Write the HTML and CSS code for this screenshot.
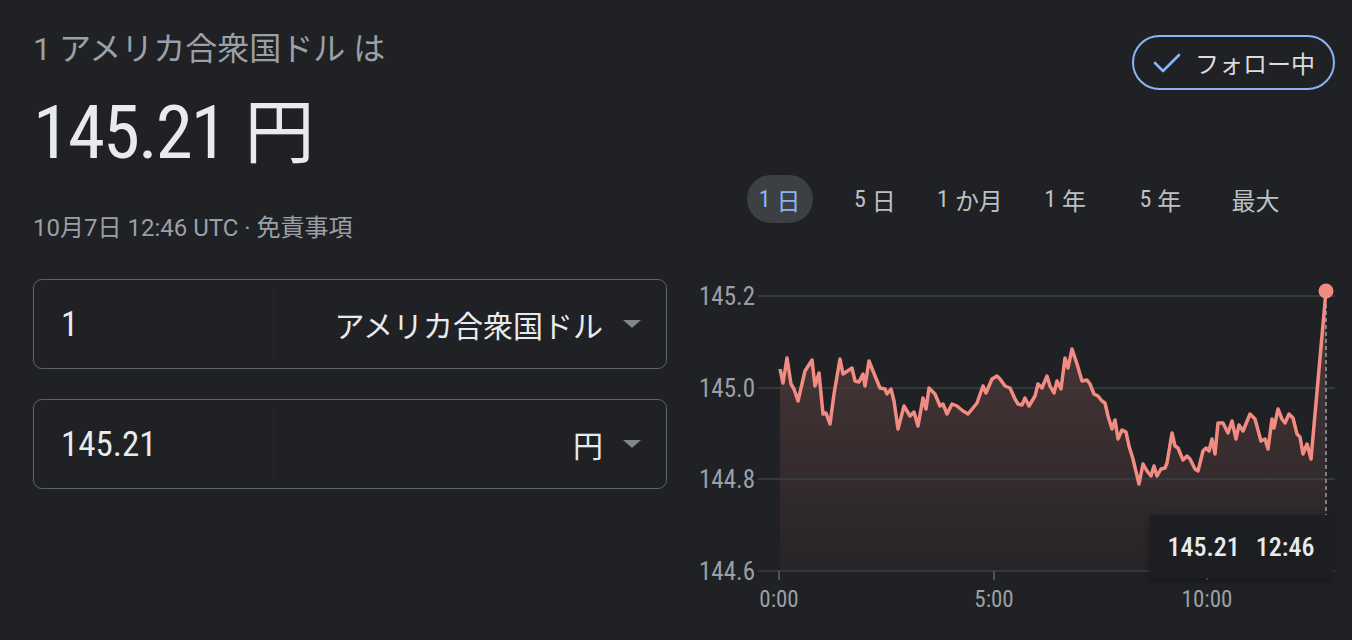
FILE: index.html
```html
<!DOCTYPE html>
<html lang="ja">
<head>
<meta charset="utf-8">
<title>1 アメリカ合衆国ドル は</title>
<link rel="stylesheet" href="styles.css">
</head>
<body>
<div class="page">
  <section class="left">
    <div class="title">1 アメリカ合衆国ドル は</div>
    <div class="big"><span class="num big-num">145.21</span> <span class="big-unit">円</span></div>
    <div class="date">10月7日 12:46 UTC · 免責事項</div>
    <div class="box">
      <div class="value num">1</div>
      <div class="cur">アメリカ合衆国ドル<span class="caret"></span></div>
    </div>
    <div class="box">
      <div class="value num">145.21</div>
      <div class="cur">円<span class="caret"></span></div>
    </div>
  </section>
  <section class="right">
    <div class="follow-row">
      <button class="follow">
        <svg class="check" width="28" height="20" viewBox="0 0 28 20"><path d="M2 10 L10 18 L26 2" fill="none" stroke="#8ab4f8" stroke-width="2.6" stroke-linecap="round" stroke-linejoin="round"/></svg>
        <span>フォロー中</span>
      </button>
    </div>
    <div class="tabs">
      <div class="tab"><span class="pill active"><span class="num">1</span> 日</span></div>
      <div class="tab"><span class="pill"><span class="num">5</span> 日</span></div>
      <div class="tab"><span class="pill"><span class="num">1</span> か月</span></div>
      <div class="tab"><span class="pill"><span class="num">1</span> 年</span></div>
      <div class="tab"><span class="pill"><span class="num">5</span> 年</span></div>
      <div class="tab"><span class="pill">最大</span></div>
    </div>
    <div class="chart">
      <svg class="chart-svg" viewBox="690 260 662 360" width="662" height="360">
        <defs>
          <linearGradient id="areaFill" gradientUnits="userSpaceOnUse" x1="0" y1="290" x2="0" y2="570">
            <stop offset="0" stop-color="#f28b82" stop-opacity="0.22"/>
            <stop offset="1" stop-color="#f28b82" stop-opacity="0.03"/>
          </linearGradient>
        </defs>
        <path fill="url(#areaFill)" d="M780,570 L780,368 783,382 787,357 791,383 794,388 798,400 805,370 812,359 815,385 819,372 823,413 826,412 830,423 834,393 840,358 843,373 852,367 855,380 859,381 863,373 865,385 869,360 873,370 880,387 885,388 887,393 891,388 894,400 898,428 904,405 910,415 914,411 918,425 923,397 926,408 929,387 935,393 940,405 943,403 947,413 952,403 957,405 963,410 968,413 977,402 983,385 986,392 992,378 997,375 1000,378 1005,385 1010,387 1015,398 1018,403 1022,404 1025,397 1029,405 1035,395 1038,383 1042,387 1047,375 1050,385 1054,392 1057,380 1061,388 1065,357 1068,367 1072,348 1077,363 1082,380 1087,379 1090,383 1094,393 1098,395 1102,400 1105,402 1108,415 1112,428 1115,419 1118,438 1122,429 1126,431 1129,445 1133,458 1139,483 1143,463 1147,470 1151,475 1154,465 1157,475 1161,468 1165,467 1167,462 1172,432 1175,445 1178,447 1183,459 1187,455 1190,458 1195,468 1198,470 1203,450 1206,447 1209,450 1212,438 1215,453 1218,422 1223,422 1228,432 1232,420 1236,438 1239,424 1243,430 1250,413 1255,418 1261,440 1265,438 1268,448 1272,418 1274,427 1278,408 1282,418 1285,422 1289,413 1293,417 1297,433 1300,436 1303,453 1307,443 1311,458 1326,290 L1326,570 Z"/>
        <g stroke="#3c4043" stroke-width="1.5">
          <line x1="758" y1="295" x2="1335" y2="295"/>
          <line x1="758" y1="387" x2="1335" y2="387"/>
          <line x1="758" y1="478" x2="1335" y2="478"/>
          <line x1="758" y1="570" x2="1335" y2="570"/>
        </g>
        <g stroke="#5f6368" stroke-width="1.5">
          <line x1="779" y1="570" x2="779" y2="579"/>
          <line x1="994" y1="570" x2="994" y2="579"/>
          <line x1="1207" y1="570" x2="1207" y2="579"/>
        </g>
        <line x1="1326" y1="296" x2="1326" y2="570" stroke="#9aa0a6" stroke-width="1.5" stroke-dasharray="4 3"/>
        <path fill="none" stroke="#f28b82" stroke-width="3.5" stroke-linejoin="round" d="M780,368 783,382 787,357 791,383 794,388 798,400 805,370 812,359 815,385 819,372 823,413 826,412 830,423 834,393 840,358 843,373 852,367 855,380 859,381 863,373 865,385 869,360 873,370 880,387 885,388 887,393 891,388 894,400 898,428 904,405 910,415 914,411 918,425 923,397 926,408 929,387 935,393 940,405 943,403 947,413 952,403 957,405 963,410 968,413 977,402 983,385 986,392 992,378 997,375 1000,378 1005,385 1010,387 1015,398 1018,403 1022,404 1025,397 1029,405 1035,395 1038,383 1042,387 1047,375 1050,385 1054,392 1057,380 1061,388 1065,357 1068,367 1072,348 1077,363 1082,380 1087,379 1090,383 1094,393 1098,395 1102,400 1105,402 1108,415 1112,428 1115,419 1118,438 1122,429 1126,431 1129,445 1133,458 1139,483 1143,463 1147,470 1151,475 1154,465 1157,475 1161,468 1165,467 1167,462 1172,432 1175,445 1178,447 1183,459 1187,455 1190,458 1195,468 1198,470 1203,450 1206,447 1209,450 1212,438 1215,453 1218,422 1223,422 1228,432 1232,420 1236,438 1239,424 1243,430 1250,413 1255,418 1261,440 1265,438 1268,448 1272,418 1274,427 1278,408 1282,418 1285,422 1289,413 1293,417 1297,433 1300,436 1303,453 1307,443 1311,458 1326,290"/>
        <circle cx="1326" cy="290" r="7.5" fill="#f28b82"/>
        <g class="ylab">
          <text x="755" y="295">145.2</text>
          <text x="755" y="387">145.0</text>
          <text x="755" y="478">144.8</text>
          <text x="755" y="570">144.6</text>
        </g>
        <g class="xlab">
          <text x="779" y="598">0:00</text>
          <text x="994" y="598">5:00</text>
          <text x="1207" y="598">10:00</text>
        </g>
      </svg>
      <div class="tooltip"><span class="num">145.21</span><span class="num">12:46</span></div>
    </div>
  </section>
</div>
</body>
</html>
```

FILE: styles.css
```css
* { box-sizing: border-box; }
html, body {
  margin: 0;
  background: #202124;
  height: 100%;
  overflow: hidden;
}
body {
  font-family: Roboto, "Noto Sans CJK JP", sans-serif;
  color: #e8eaed;
}
.num {
  font-family: "Roboto Condensed", "Liberation Sans Narrow", Roboto, "Noto Sans CJK JP", sans-serif;
}
.page {
  display: flex;
  width: 1352px;
  height: 640px;
}
.left {
  width: 667px;
  padding-left: 33px;
  flex: none;
}
.title {
  margin-top: 31px;
  font-size: 32px;
  line-height: 36px;
  color: #9aa0a6;
}
.big {
  margin-top: 25px;
  font-size: 75px;
  line-height: 80px;
  color: #e8eaed;
}
.big-num {
  letter-spacing: -2px;
}
.big-unit {
  font-size: 70px;
}
.date {
  margin-top: 39px;
  font-size: 24px;
  line-height: 30px;
  color: #9aa0a6;
}
.box {
  margin-top: 36px;
  height: 90px;
  border: 1px solid #5f6368;
  border-radius: 9px;
  display: flex;
  align-items: center;
}
.box + .box { margin-top: 30px; }
.value {
  width: 240px;
  align-self: stretch;
  display: flex;
  align-items: center;
  padding-left: 27px;
  font-size: 35px;
  color: #e8eaed;
  border-right: 1px solid #27282b;
  margin: 10px 0;
}
.cur {
  flex: 1;
  display: flex;
  align-items: center;
  justify-content: flex-end;
  padding-right: 25px;
  font-size: 30px;
  color: #e8eaed;
}
.caret {
  margin-left: 20px;
  width: 0;
  height: 0;
  border-left: 9px solid transparent;
  border-right: 9px solid transparent;
  border-top: 8px solid #80868b;
}
.right {
  flex: 1;
  display: flex;
  flex-direction: column;
}
.follow-row {
  display: flex;
  justify-content: flex-end;
  padding-right: 17px;
  margin-top: 35px;
}
.follow {
  display: flex;
  align-items: center;
  width: 203px;
  height: 55px;
  padding: 0 0 0 19px;
  border: 2px solid #8ab4f8;
  border-radius: 28px;
  background: transparent;
  color: #dadce0;
  font-family: Roboto, "Noto Sans CJK JP", sans-serif;
  font-size: 24px;
  gap: 14px;
}
.check { flex: none; }
.tabs {
  margin-top: 85px;
  margin-left: 65px;
  display: grid;
  grid-template-columns: repeat(6, 95.2px);
  height: 48px;
}
.tab {
  display: flex;
  justify-content: center;
  align-items: center;
}
.pill {
  height: 48px;
  padding: 0 12px;
  border-radius: 24px;
  display: flex;
  align-items: center;
  font-size: 24px;
  color: #bdc1c6;
  white-space: pre;
}
.pill.active {
  background: #3c4043;
  color: #8ab4f8;
}
.chart {
  position: relative;
  margin-top: 38px;
  margin-left: 23px;
  width: 662px;
  height: 360px;
}
.chart-svg { display: block; }
.ylab text {
  font-family: "Roboto Condensed", "Liberation Sans Narrow", Roboto, sans-serif;
  font-size: 25px;
  fill: #9aa0a6;
  text-anchor: end;
  dominant-baseline: central;
}
.xlab text {
  font-family: "Roboto Condensed", "Liberation Sans Narrow", Roboto, sans-serif;
  font-size: 23px;
  fill: #9aa0a6;
  text-anchor: middle;
  dominant-baseline: central;
}
.tooltip {
  position: absolute;
  left: 460px;
  top: 254px;
  width: 182px;
  height: 63px;
  background: #1d1e21;
  box-shadow: 0 2px 8px rgba(0,0,0,0.35);
  display: flex;
  align-items: center;
  justify-content: center;
  gap: 16px;
  font-size: 26px;
  font-weight: 500;
  color: #e8eaed;
}
```
